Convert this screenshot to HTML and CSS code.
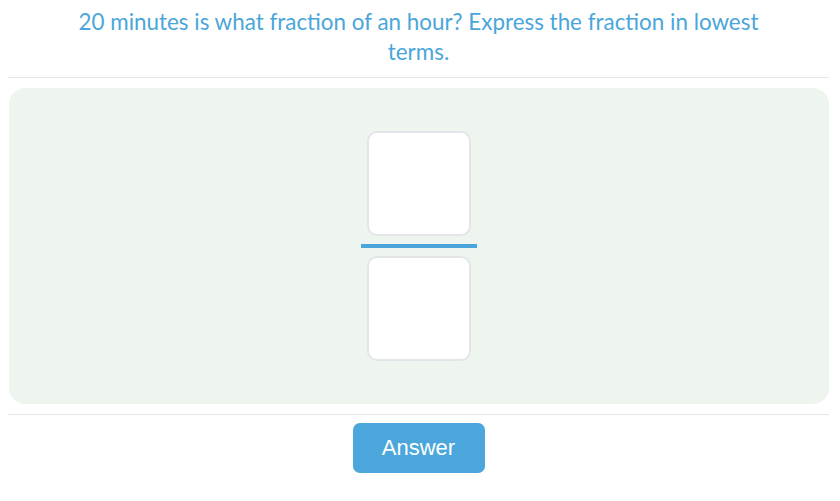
FILE: index.html
```html
<!DOCTYPE html>
<html lang="en">
<head>
    <meta charset="UTF-8">
    <meta name="viewport" content="width=device-width, initial-scale=1.0">
    <title>Fraction question</title>
    <link rel="stylesheet" href="styles.css">
</head>
<body>
    <div class="question-wrap">
        <h1 class="question">20 minutes is what fraction of an hour? Express the fraction in lowest terms.</h1>

        <div class="work-area">
            <div class="fraction">
                <input class="frac-box" type="text" aria-label="numerator">
                <div class="frac-bar"></div>
                <input class="frac-box" type="text" aria-label="denominator">
            </div>
        </div>

        <div class="actions">
            <button class="btn-answer">Answer</button>
        </div>
    </div>
</body>
</html>
```

FILE: styles.css
```css
* {
    margin: 0;
    padding: 0;
    box-sizing: border-box;
}

body {
    font-family: 'Source Sans Pro', 'Lato', 'Open Sans', sans-serif;
    background: #fff;
    color: #333;
}

.question-wrap {
    width: 821px;
    margin-left: 8px;
}

.question {
    font-size: 22.4px;
    font-weight: 400;
    line-height: 30px;
    color: #4aa6da;
    text-align: center;
    padding: 7px 60px 10px;
    border-bottom: 1px solid #e6e6e6;
}

.work-area {
    margin: 10px 0 0 1px;
    height: 316px;
    background: #eef5ef;
    border-radius: 16px;
    display: flex;
    align-items: center;
    justify-content: center;
}

.fraction {
    display: flex;
    flex-direction: column;
    align-items: center;
    gap: 8px;
}

.frac-box {
    width: 104px;
    height: 105px;
    background: #fff;
    border: 2px solid #e3e6e8;
    border-radius: 10px;
    outline: none;
}

.frac-bar {
    width: 116px;
    height: 4px;
    background: #4aa6da;
}

.actions {
    margin-top: 10px;
    border-top: 1px solid #e6e6e6;
    padding-top: 8px;
    display: flex;
    justify-content: center;
}

.btn-answer {
    width: 132px;
    height: 50px;
    background: #4ba7db;
    color: #fff;
    border: none;
    border-radius: 7px;
    font-family: 'Liberation Sans', Arial, sans-serif;
    font-size: 22px;
    cursor: pointer;
}
```
